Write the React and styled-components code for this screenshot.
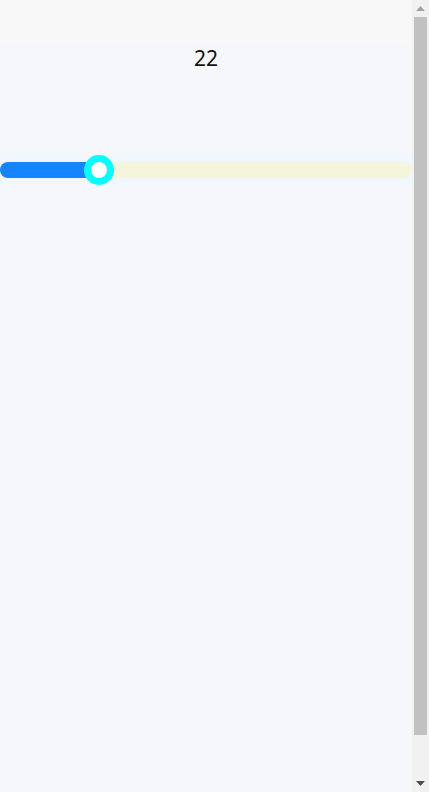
import React, { useState } from 'react';
import styled, { createGlobalStyle } from 'styled-components';

const GlobalStyle = createGlobalStyle`
html, body {
margin: 0;
padding: 0;
background: #f5f7fb;
font-family: "Noto Sans", "Open Sans", sans-serif;
}
`;

const Page = styled.div`
min-height: 836px;
padding-right: 17px;
display: flex;
flex-direction: column;
`;

const Header = styled.header`
height: 43px;
background: #f8f8f8;
`;

const Main = styled.main`
flex: 1;
display: flex;
flex-direction: column;
`;

const Value = styled.div`
text-align: center;
font-size: 21px;
line-height: 28px;
color: #111;
margin-top: 1px;
`;

const SliderBand = styled.div`
margin-top: 83px;
height: 30px;
background: #f0f7ff;
display: flex;
align-items: center;
`;

const Track = styled.div`
width: 100%;
height: 16px;
border-radius: 8px;
background: #f5f5dc;
position: relative;
`;

const Fill = styled.div`
height: 100%;
border-radius: 8px;
background: #1684ff;
`;

const Thumb = styled.div`
position: absolute;
top: 50%;
width: 16px;
height: 16px;
border: 7px solid #00ffff;
border-radius: 50%;
background: #fff;
transform: translate(-50%, -50%);
`;

/* stand-in for the window's classic scrollbar */
const ScrollBar = styled.div`
position: fixed;
top: 0;
right: 0;
bottom: 0;
width: 17px;
background: #f1f1f1;
display: flex;
flex-direction: column;
`;

const ArrowButton = styled.div`
height: 17px;
display: flex;
align-items: center;
justify-content: center;
flex-shrink: 0;
`;

const ScrollTrack = styled.div`
flex: 1;
padding: 0 2px;
`;

const ScrollThumb = styled.div`
height: 94.7%;
background: #c1c1c1;
`;

const Arrow = ({ down, color }) => (
  <svg width="9" height="5" viewBox="0 0 9 5">
    <path d={down ? 'M0 0 H9 L4.5 5 Z' : 'M0 5 H9 L4.5 0 Z'} fill={color} />
  </svg>
);

const App = () => {
  const [value] = useState(22);
  const max = 92;
  const pct = `${(value / max) * 100}%`;

  return (
    <>
      <GlobalStyle />
      <Page>
        <Header />
        <Main>
          <Value>{value}</Value>
          <SliderBand>
            <Track>
              <Fill style={{ width: pct }} />
              <Thumb style={{ left: pct }} />
            </Track>
          </SliderBand>
        </Main>
      </Page>
      <ScrollBar>
        <ArrowButton><Arrow color="#a3a3a3" /></ArrowButton>
        <ScrollTrack><ScrollThumb /></ScrollTrack>
        <ArrowButton><Arrow down color="#505050" /></ArrowButton>
      </ScrollBar>
    </>
  );
};

export default App;
